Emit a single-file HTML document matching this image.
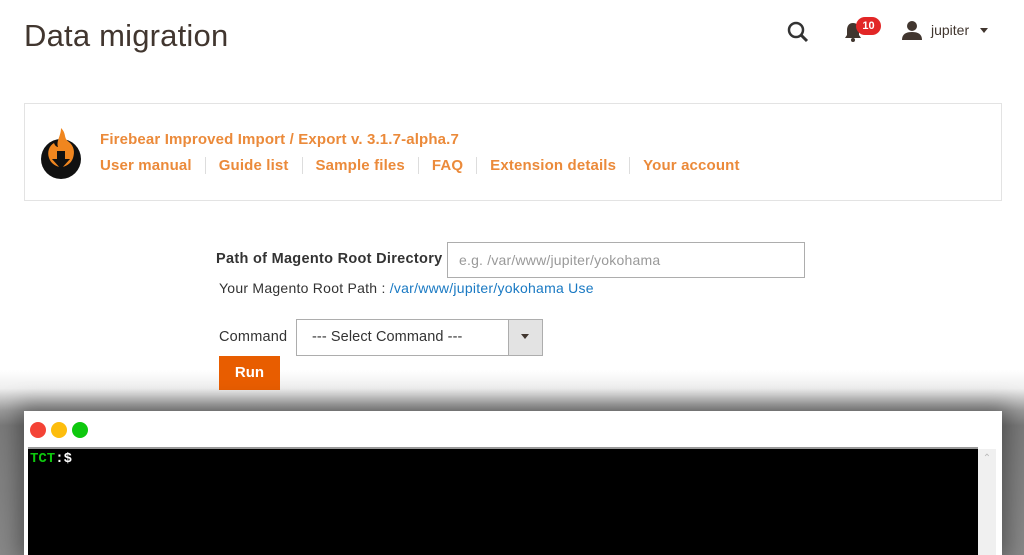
<!DOCTYPE html>
<html><head><meta charset="utf-8"><style>
*{margin:0;padding:0;box-sizing:border-box}
body{width:1024px;height:555px;overflow:hidden;background:#fff;font-family:"Liberation Sans",sans-serif;position:relative;color:#333}
.abs{position:absolute}
h1{position:absolute;left:24px;top:18px;font-size:31px;font-weight:normal;color:#41362f;letter-spacing:0.2px}
.box{left:24px;top:103px;width:978px;height:98px;border:1px solid #e3e3e3}
.or{color:#eb8a3a;font-weight:bold;font-size:15px;letter-spacing:0.15px}
.links span{display:inline-block;padding:0 13px;border-left:1px solid #ddd}
.links span:first-child{padding-left:0;border:none}
</style></head><body>
<h1>Data migration</h1>
<svg class="abs" style="left:786px;top:20px" width="24" height="24" viewBox="0 0 24 24"><circle cx="10" cy="10" r="7" fill="none" stroke="#333" stroke-width="2.5"/><line x1="15" y1="15" x2="21" y2="21" stroke="#333" stroke-width="3"/></svg>
<svg class="abs" style="left:844px;top:22px" width="18" height="20" viewBox="0 0 18 20"><path d="M9 1C5 1 3 4 3 8v5l-2 3h16l-2-3V8c0-4-2-7-6-7z" fill="#41362f"/><circle cx="9" cy="18" r="2" fill="#41362f"/></svg>
<div class="abs" style="left:856px;top:17px;width:25px;height:18px;border-radius:9px;background:#e22626;color:#fff;font-size:11px;font-weight:bold;text-align:center;line-height:18px">10</div>
<svg class="abs" style="left:902px;top:20px" width="20" height="20" viewBox="0 0 20 20"><circle cx="10" cy="6" r="5" fill="#41362f"/><path d="M0 20c0-6 4-8 10-8s10 2 10 8z" fill="#41362f"/></svg>
<div class="abs" style="left:931px;top:22px;font-size:14px;color:#41362f">jupiter</div>
<div class="abs" style="left:980px;top:28px;border:4px solid transparent;border-top:5px solid #41362f"></div>
<div class="abs box"></div>
<svg class="abs" style="left:40px;top:125px" width="42" height="55" viewBox="0 0 42 55"><circle cx="21" cy="34" r="20" fill="#111"/><path d="M21 3c6 6 2 10 8 14 5 4 6 10 4 16-2 6-8 9-12 9s-10-3-12-9c-2-6 0-12 5-15 1 3 3 4 4 4-2-6 3-11 3-19z" fill="#f0861f"/><path d="M17 26h8v8h5l-9 10-9-10h5z" fill="#111"/></svg>
<div class="abs or" style="left:100px;top:131px">Firebear Improved Import / Export v. 3.1.7-alpha.7</div>
<div class="abs or links" style="left:100px;top:157px"><span>User manual</span><span>Guide list</span><span>Sample files</span><span>FAQ</span><span>Extension details</span><span>Your account</span></div>
<div class="abs" style="left:216px;top:251px;font-size:14.5px;font-weight:bold;color:#333;letter-spacing:0.3px">Path of Magento Root Directory</div>
<div class="abs" style="left:447px;top:242px;width:358px;height:36px;border:1px solid #adadad;font-size:14px;color:#999;padding:9px 11px;letter-spacing:0.2px">e.g. /var/www/jupiter/yokohama</div>
<div class="abs" style="left:219px;top:280px;font-size:14px;color:#333;letter-spacing:0.25px">Your Magento Root Path : <span style="color:#1979c3">/var/www/jupiter/yokohama Use</span></div>
<div class="abs" style="left:219px;top:329px;font-size:14.5px;letter-spacing:0.2px">Command</div>
<div class="abs" style="left:296px;top:319px;width:247px;height:37px;border:1px solid #adadad;font-size:14.5px;padding:9px 15px;letter-spacing:0.1px">--- Select Command ---</div>
<div class="abs" style="left:508px;top:320px;width:34px;height:35px;background:#e3e3e3;border-left:1px solid #adadad"></div>
<div class="abs" style="left:521px;top:334px;border:4px solid transparent;border-top:5px solid #41362f"></div>
<div class="abs" style="left:0;top:370px;width:1024px;height:185px;background:linear-gradient(#fff,#eee 10%,#999 22%,#7a7a7a 30%,#888 100%)"></div>
<div class="abs" style="left:219px;top:356px;width:61px;height:34px;background:#e85d00;color:#fff;font-size:15px;font-weight:bold;text-align:center;line-height:33px">Run</div>
<div class="abs" style="left:24px;top:411px;width:978px;height:144px;background:#fff;box-shadow:0 0 20px 6px rgba(0,0,0,.35)"></div>
<div class="abs" style="left:30px;top:422px;width:16px;height:16px;border-radius:50%;background:#f44336"></div>
<div class="abs" style="left:51px;top:422px;width:16px;height:16px;border-radius:50%;background:#fdbd0d"></div>
<div class="abs" style="left:72px;top:422px;width:16px;height:16px;border-radius:50%;background:#0ec80e"></div>
<div class="abs" style="left:28px;top:447px;width:950px;height:108px;background:#000;border-top:2px solid #999"></div>
<div class="abs" style="left:978px;top:449px;width:18px;height:106px;background:#f0f0f0;color:#bbb;font-size:10px;text-align:center;padding-top:4px">&#8963;</div>
<div class="abs" style="left:30px;top:451px;font-family:'Liberation Mono',monospace;font-size:14px;font-weight:bold;color:#0ec80e">TCT<span style="color:#fff">:$</span></div>
</body></html>
